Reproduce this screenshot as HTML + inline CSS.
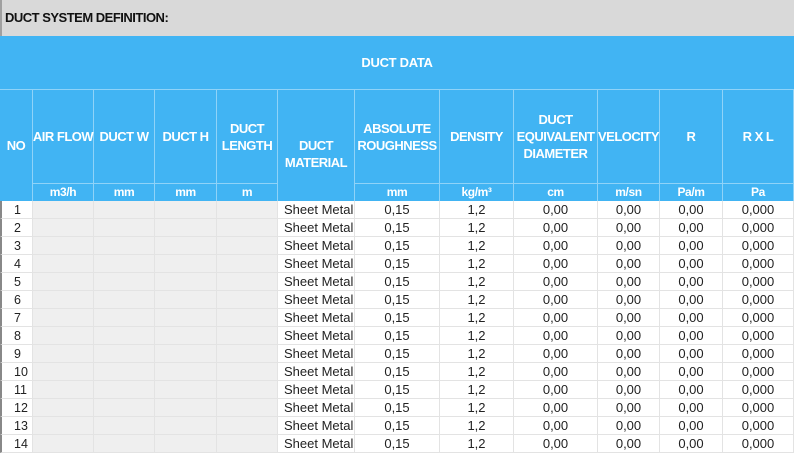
<!DOCTYPE html>
<html><head><style>
*{margin:0;padding:0;box-sizing:border-box}
body{width:794px;height:447px;overflow:hidden;background:#fff;font-family:"Liberation Sans",sans-serif;position:relative}
.top{position:absolute;left:0;top:0;width:794px;height:36px;background:#d9d9d9;border-left:2px solid #a0a0a0}
.top span{position:absolute;left:3px;top:10px;font-weight:bold;font-size:13px;letter-spacing:-0.5px;color:#111}
.blue{position:absolute;left:0;top:36px;width:794px;height:165px;background:#41b4f3}
.dd{position:absolute;left:0;top:36px;width:794px;height:54px;line-height:54px;text-align:center;color:#fff;font-weight:bold;font-size:13px;letter-spacing:-0.3px;border-bottom:1px solid #8fd3f8}
.h{position:absolute;color:#fff;font-weight:bold;font-size:13px;letter-spacing:-0.5px;text-align:center;display:flex;align-items:center;justify-content:center;line-height:17px;border-right:1px solid #8fd3f8;white-space:nowrap}
.u{position:absolute;top:183px;height:18px;color:#fff;font-weight:bold;font-size:12px;text-align:center;line-height:17px;border-top:1px solid #8fd3f8;border-right:1px solid #8fd3f8;letter-spacing:-0.4px}
.c{position:absolute;height:18px;border-right:1px solid #e3e3e3;border-bottom:1px solid #e3e3e3;font-size:13px;text-align:center;line-height:18px;color:#222}
.g{background:#efefef}
</style></head><body>
<div class="top"><span>DUCT SYSTEM DEFINITION:</span></div>
<div class="blue"></div>
<div class="dd">DUCT DATA</div>
<div id="hdr"></div>
<script>
var xs=[0,33,94,155,217,278,355,440,514,598,660,723,794];
var hd=["NO","AIR FLOW","DUCT W","DUCT H","DUCT<br>LENGTH","DUCT<br>MATERIAL","ABSOLUTE<br>ROUGHNESS","DENSITY","DUCT<br>EQUIVALENT<br>DIAMETER","VELOCITY","R","R X L"];
var un=[null,"m3/h","mm","mm","m",null,"mm","kg/m³","cm","m/sn","Pa/m","Pa"];
var h="";
for(var i=0;i<12;i++){
 var w=xs[i+1]-xs[i];
 var full=(i==0||i==5);
 var ty=90, ht=full?111:93;
 var off=(i==5)?16:0;
 h+='<div class="h" style="left:'+xs[i]+'px;top:'+ty+'px;width:'+w+'px;height:'+ht+'px;padding-top:'+off+'px">'+hd[i]+'</div>';
 if(un[i])h+='<div class="u" style="left:'+xs[i]+'px;width:'+w+'px">'+un[i]+'</div>';
}
var vals=[null,"","","","","Sheet Metal","0,15","1,2","0,00","0,00","0,00","0,000"];
for(var r=0;r<14;r++){
 var y=201+r*18;
 for(var i=0;i<12;i++){
  var w=xs[i+1]-xs[i];
  var t=i==0?(r+1):vals[i];
  var cls="c"+((i>=1&&i<=4)?" g":"");
  var st='left:'+xs[i]+'px;top:'+y+'px;width:'+w+'px;';
  if(i==0)st+='text-align:left;padding-left:12px;font-size:12.5px;border-left:2px solid #888;';
  if(i==5)st+='text-align:left;padding-left:6px;';
  h+='<div class="'+cls+'" style="'+st+'">'+t+'</div>';
 }
}
document.getElementById("hdr").innerHTML=h;
</script>
</body></html>
